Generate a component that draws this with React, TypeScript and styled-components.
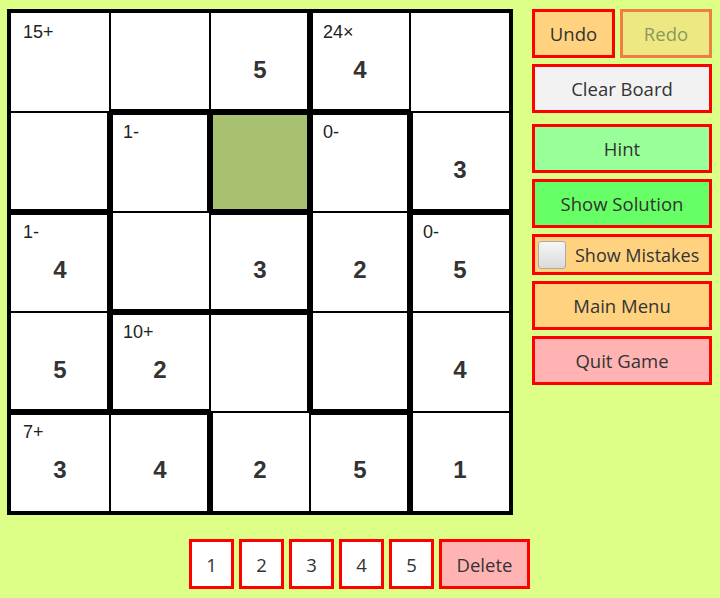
import React from "react";
import styled, { createGlobalStyle } from "styled-components";

const GlobalStyle = createGlobalStyle`
  html, body {
    margin: 0;
    padding: 0;
    background-color: #ddff88;
  }
  * {
    box-sizing: border-box;
  }
`;

// cage letter for every cell, row by row
const cages = ["AAABB", "ACADB", "ECCDF", "EGGDF", "HHGGF"];

const clues: Record<string, string> = {
  "0,0": "15+",
  "0,3": "24×",
  "1,1": "1-",
  "1,3": "0-",
  "2,0": "1-",
  "2,4": "0-",
  "3,1": "10+",
  "4,0": "7+",
};

const values = [
  ["", "", "5", "4", ""],
  ["", "", "", "", "3"],
  ["4", "", "3", "2", "5"],
  ["5", "2", "", "", "4"],
  ["3", "4", "2", "5", "1"],
];

const selected = { row: 1, col: 2 };

const THIN = 1;
const THICK = 3;

interface Edges {
  top: number;
  right: number;
  bottom: number;
  left: number;
}

const cageKey = (r: number, c: number) =>
  r === selected.row && c === selected.col ? "sel" : cages[r][c];

const edgeWidth = (r: number, c: number, nr: number, nc: number) => {
  if (nr < 0 || nr > 4 || nc < 0 || nc > 4) return THIN;
  return cageKey(r, c) === cageKey(nr, nc) ? THIN : THICK;
};

const Page = styled.div`
  display: flex;
  flex-direction: column;
  padding: 9px 0 0 7px;
`;

const TopRow = styled.div`
  display: flex;
  align-items: flex-start;
  gap: 19px;
`;

const Board = styled.div`
  display: grid;
  grid-template-columns: repeat(5, 100px);
  grid-template-rows: repeat(5, 100px);
  border: 3px solid #000;
  background: #fff;
`;

const Cell = styled.div<{ $edges: Edges; $selected: boolean }>`
  display: flex;
  flex-direction: column;
  width: 100px;
  height: 100px;
  padding: 10px 0 0 13px;
  background-color: ${(p) => (p.$selected ? "#a8c170" : "#fff")};
  box-shadow: ${({ $edges }) =>
    `inset 0 ${$edges.top}px 0 #000, inset -${$edges.right}px 0 0 #000, inset 0 -${$edges.bottom}px 0 #000, inset ${$edges.left}px 0 0 #000`};
  font-family: "Liberation Sans", Arial, sans-serif;
  color: #333;
`;

const Clue = styled.div`
  height: 20px;
  font-size: 18px;
  line-height: 20px;
  color: #222;
`;

const Value = styled.div`
  margin: 14px 0 0 -13px;
  height: 28px;
  font-size: 24px;
  font-weight: bold;
  line-height: 28px;
  text-align: center;
`;

const Side = styled.div`
  display: flex;
  flex-direction: column;
  width: 180px;
`;

const Pair = styled.div`
  display: flex;
  gap: 5px;
`;

const Button = styled.button<{ $bg: string; $w?: number; $h?: number; $gap?: number; $faded?: boolean }>`
  width: ${(p) => (p.$w ? `${p.$w}px` : "100%")};
  height: ${(p) => p.$h ?? 49}px;
  margin-top: ${(p) => p.$gap ?? 0}px;
  padding: 0;
  border: 3px solid #ff0000;
  background-color: ${(p) => p.$bg};
  color: #333;
  font-family: "Open Sans", "Noto Sans", sans-serif;
  font-size: 18.5px;
  opacity: ${(p) => (p.$faded ? 0.5 : 1)};
  cursor: pointer;
`;

const MistakesToggle = styled.label`
  display: flex;
  align-items: center;
  gap: 9px;
  height: 41px;
  margin-top: 6px;
  padding-left: 3px;
  border: 3px solid #ff0000;
  background-color: #ffd280;
  color: #333;
  font-family: "Open Sans", "Noto Sans", sans-serif;
  font-size: 18px;
  white-space: nowrap;
`;

const Check = styled.input`
  appearance: none;
  width: 28px;
  height: 28px;
  margin: 0;
  border: 1px solid #a9a9a9;
  border-radius: 3px;
  background: linear-gradient(#f6f6f6, #dadada);
  flex-shrink: 0;
`;

const Pad = styled.div`
  display: flex;
  justify-content: center;
  gap: 5px;
  margin: 24px 0 0 -8px;
`;

export default function App() {
  return (
    <>
      <GlobalStyle />
      <Page>
        <TopRow>
          <Board>
            {values.map((row, r) =>
              row.map((v, c) => {
                const edges = {
                  top: edgeWidth(r, c, r - 1, c),
                  right: edgeWidth(r, c, r, c + 1),
                  bottom: edgeWidth(r, c, r + 1, c),
                  left: edgeWidth(r, c, r, c - 1),
                };
                return (
                  <Cell
                    key={`${r}-${c}`}
                    $edges={edges}
                    $selected={r === selected.row && c === selected.col}
                  >
                    <Clue>{clues[`${r},${c}`] ?? ""}</Clue>
                    <Value>{v}</Value>
                  </Cell>
                );
              })
            )}
          </Board>
          <Side>
            <Pair>
              <Button $bg="#ffd280" $w={83}>
                Undo
              </Button>
              <Button $bg="#ffd280" $w={92} $faded>
                Redo
              </Button>
            </Pair>
            <Button $bg="#f2f2f2" $gap={6}>
              Clear Board
            </Button>
            <Button $bg="#99ff99" $gap={11}>
              Hint
            </Button>
            <Button $bg="#66ff66" $gap={6}>
              Show Solution
            </Button>
            <MistakesToggle>
              <Check type="checkbox" />
              Show Mistakes
            </MistakesToggle>
            <Button $bg="#ffd280" $gap={6}>
              Main Menu
            </Button>
            <Button $bg="#ffb3b3" $gap={6}>
              Quit Game
            </Button>
          </Side>
        </TopRow>
        <Pad>
          {["1", "2", "3", "4", "5"].map((n) => (
            <Button key={n} $bg="#fff" $w={45} $h={50}>
              {n}
            </Button>
          ))}
          <Button $bg="#ffb3b3" $w={91} $h={50}>
            Delete
          </Button>
        </Pad>
      </Page>
    </>
  );
}
